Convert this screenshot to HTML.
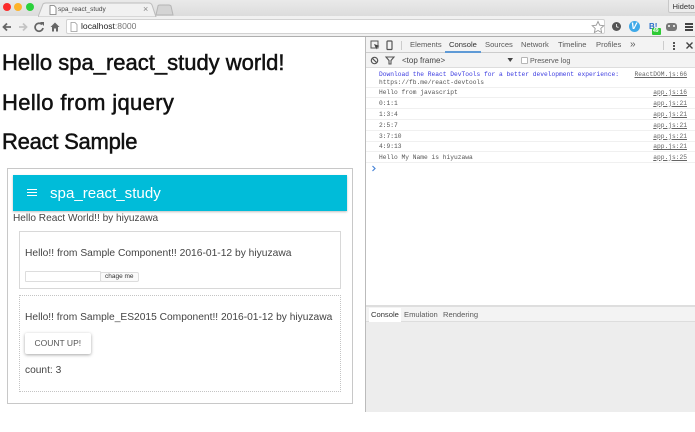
<!DOCTYPE html>
<html><head><meta charset="utf-8">
<style>
html,body{margin:0;padding:0;background:#fff;}
body{width:695px;height:432px;position:relative;overflow:hidden;font-family:"Liberation Sans",sans-serif;filter:blur(.3px);}
.a{position:absolute;white-space:nowrap;}
.box{position:absolute;box-sizing:border-box;}
.m{font-family:"Liberation Mono",monospace;font-size:6.25px;color:#555;position:absolute;white-space:nowrap;line-height:9px;}
.l{font-family:"Liberation Mono",monospace;font-size:6.25px;color:#666;position:absolute;right:8px;text-decoration:underline;white-space:nowrap;line-height:9px;}
.sep{position:absolute;left:366px;right:0;height:1px;background:#f0f0f0;}
.t{position:absolute;font-size:7.6px;color:#5a5a5a;white-space:nowrap;line-height:10px;}
h1{position:absolute;left:2px;margin:0;font-weight:normal;font-size:22px;-webkit-text-stroke:.5px #111;color:#111;white-space:nowrap;line-height:28px;}
</style></head><body>
<!-- browser chrome -->
<div class="box" style="left:0;top:0;width:695px;height:16px;background:linear-gradient(#e9e9e9,#dcdcdc);"></div>
<div class="box" style="left:0;top:16px;width:695px;height:21px;background:#f1f1f1;border-bottom:1px solid #aeaeae;"></div>
<div class="box" style="left:3px;top:3px;width:8px;height:8px;border-radius:50%;background:#fb2b2b;"></div>
<div class="box" style="left:14px;top:3px;width:8px;height:8px;border-radius:50%;background:#fdb32a;"></div>
<div class="box" style="left:26px;top:3px;width:8px;height:8px;border-radius:50%;background:#2bd13c;"></div>
<svg class="a" style="left:38px;top:2px" width="125" height="15"><path d="M0 15 L5 2 Q6 1 8 1 L111 1 Q113 1 114 3 L118 15 Z" fill="#f1f1f1" stroke="#bdbdbd" stroke-width="1"/></svg>
<svg class="a" style="left:155px;top:4px" width="20" height="12"><path d="M1 11 L3 2 Q3 1 5 1 L14 1 Q15 1 16 2 L18 11 Z" fill="#d4d4d4" stroke="#b5b5b5"/></svg>
<svg class="a" style="left:49px;top:5px" width="8" height="10"><path d="M1 .5 H5 L7 2.5 V9.5 H1 Z" fill="#fff" stroke="#777" stroke-width=".8"/></svg>
<div class="a" style="left:58px;top:5px;font-size:6.5px;line-height:10px;color:#444;">spa_react_study</div>
<div class="a" style="left:143px;top:4px;font-size:9px;line-height:11px;color:#888;">×</div>
<!-- nav icons -->
<svg class="a" style="left:0;top:20px" width="62" height="14">
<path d="M11 7 H4 M7 3.5 L3.5 7 L7 10.5" fill="none" stroke="#666" stroke-width="1.8"/>
<path d="M19 7 H26 M23 3.5 L26.5 7 L23 10.5" fill="none" stroke="#c4c4c4" stroke-width="1.8"/>
<path d="M42 4.5 A4 4 0 1 0 43 8" fill="none" stroke="#666" stroke-width="1.7"/><path d="M40 2 L44 2 L44 6 Z" fill="#666"/>
<path d="M50.500 7 L55 2.500 L59.500 7 H58 V11.500 H56 V8.500 H54 V11.500 H52 V7 Z" fill="#666"/>
</svg>
<div class="box" style="left:66px;top:19px;width:539px;height:15px;background:#fff;border:1px solid #d2d2d2;border-radius:2px;"></div>
<svg class="a" style="left:70px;top:22px" width="8" height="10"><path d="M1 .5 H5 L7 2.5 V9.5 H1 Z" fill="#fff" stroke="#999" stroke-width=".8"/></svg>
<div class="a" style="left:81px;top:21px;font-size:8.6px;line-height:11px;color:#222;">localhost<span style="color:#777">:8000</span></div>
<svg class="a" style="left:591px;top:20px" width="14" height="14"><path d="M7 1.500 L8.700 5.200 L12.800 5.700 L9.800 8.400 L10.600 12.500 L7 10.500 L3.400 12.500 L4.200 8.400 L1.200 5.700 L5.300 5.200 Z" fill="#fff" stroke="#999" stroke-width=".9"/></svg>
<div class="box" style="left:612px;top:22px;width:9px;height:9px;border-radius:50%;background:#555;"></div>
<svg class="a" style="left:612px;top:22px" width="9" height="9"><path d="M4.500 2 V4.700 L6.500 5.500" fill="none" stroke="#ddd"/></svg>
<div class="box" style="left:629px;top:21px;width:11px;height:11px;border-radius:50%;background:#3fa9e8;"></div>
<div class="a" style="left:631px;top:21px;font-size:9px;line-height:11px;font-weight:bold;font-style:italic;color:#fff;">V</div>
<div class="a" style="left:649px;top:22px;font-size:8px;line-height:9px;font-weight:bold;color:#2a6fc9;">B!</div>
<div class="box" style="left:652px;top:28px;width:9px;height:7px;background:#2ecb35;border-radius:1px;"></div>
<div class="a" style="left:653px;top:28px;font-size:5px;line-height:7px;color:#fff;font-weight:bold;">49</div>
<div class="box" style="left:666px;top:23px;width:11px;height:8px;border-radius:3px;background:#777;"></div>
<div class="box" style="left:668px;top:25px;width:2px;height:2px;background:#ddd;"></div>
<div class="box" style="left:673px;top:25px;width:2px;height:2px;background:#ddd;"></div>
<div class="box" style="left:685px;top:23px;width:8px;height:2px;background:#444;"></div>
<div class="box" style="left:685px;top:26px;width:8px;height:2px;background:#444;"></div>
<div class="box" style="left:685px;top:29px;width:8px;height:2px;background:#444;"></div>
<div class="box" style="left:668px;top:0;width:27px;height:13px;background:#ececec;border:1px solid #c8c8c8;border-top:0;border-right:0;border-radius:0 0 0 2px;"></div>
<div class="a" style="left:672.500px;top:2px;font-size:7.6px;line-height:10px;color:#333;">Hideto</div>

<!-- page -->
<h1 style="top:49px;">Hello spa_react_study world!</h1>
<h1 style="top:89px;letter-spacing:.35px;">Hello from jquery</h1>
<h1 style="top:128px;letter-spacing:-.25px;">React Sample</h1>
<div class="box" style="left:7px;top:168px;width:346px;height:236px;border:1px solid #c8c8c8;"></div>
<div class="box" style="left:13px;top:175px;width:334px;height:36px;background:#00bcd9;box-shadow:0 1px 2px rgba(0,0,0,.25);"></div>
<div class="box" style="left:27px;top:189px;width:10px;height:1.200px;background:#fff;"></div>
<div class="box" style="left:27px;top:192px;width:10px;height:1.200px;background:#fff;"></div>
<div class="box" style="left:27px;top:195px;width:10px;height:1.200px;background:#fff;"></div>
<div class="a" style="left:50px;top:185px;font-size:15.100px;line-height:18px;color:#fff;">spa_react_study</div>
<div class="a" style="left:13px;top:212.500px;font-size:10.100px;line-height:12px;color:#444;">Hello React World!! by hiyuzawa</div>
<div class="box" style="left:19px;top:231px;width:322px;height:58px;border:1px solid #d8d8d8;"></div>
<div class="a" style="left:25px;top:248px;font-size:10.270px;line-height:12px;color:#444;">Hello!! from Sample Component!! 2016-01-12 by hiyuzawa</div>
<div class="box" style="left:25px;top:271px;width:76px;height:11px;border:1px solid #ddd;border-radius:1px;background:#fff;"></div>
<div class="box" style="left:100px;top:272px;width:39px;height:10px;border:1px solid #ddd;border-radius:2px;background:#fafafa;"></div>
<div class="a" style="left:105px;top:272px;font-size:6.500px;line-height:10px;color:#333;">chage me</div>
<div class="box" style="left:19px;top:295px;width:322px;height:97px;border:1px dotted #c4c4c4;"></div>
<div class="a" style="left:25px;top:312px;font-size:10.230px;line-height:12px;color:#444;">Hello!! from Sample_ES2015 Component!! 2016-01-12 by hiyuzawa</div>
<div class="box" style="left:25px;top:333px;width:66px;height:21px;background:#fff;border-radius:2px;box-shadow:0 1px 3px rgba(0,0,0,.35);"></div>
<div class="a" style="left:34.500px;top:338px;font-size:8.500px;line-height:11px;color:#555;">COUNT UP!</div>
<div class="a" style="left:25px;top:365px;font-size:10.200px;line-height:12px;color:#444;">count: 3</div>

<!-- devtools -->
<div class="box" style="left:365px;top:37px;width:1px;height:375px;background:#bbb;"></div>
<div class="box" style="left:366px;top:37px;width:329px;height:16px;background:#f3f3f3;border-bottom:1px solid #ccc;"></div>
<svg class="a" style="left:370px;top:40px" width="26" height="11"><rect x="1" y="1" width="7" height="7" fill="none" stroke="#555" stroke-width="1"/><path d="M4 4 L9.500 6 L7 7 L6.500 9.500 Z" fill="#444"/><rect x="17" y="1" width="5" height="8.500" rx=".8" fill="none" stroke="#555" stroke-width="1.200"/></svg>
<div class="box" style="left:401px;top:41px;width:1px;height:9px;background:#ccc;"></div>
<div class="t" style="left:410px;top:40px;">Elements</div>
<div class="t" style="left:449px;top:40px;color:#333;">Console</div>
<div class="box" style="left:445px;top:51px;width:36px;height:2px;background:#5e9ad6;"></div>
<div class="t" style="left:485px;top:40px;">Sources</div>
<div class="t" style="left:521px;top:40px;">Network</div>
<div class="t" style="left:558px;top:40px;">Timeline</div>
<div class="t" style="left:596px;top:40px;">Profiles</div>
<div class="t" style="left:630px;top:40px;font-size:10px;">»</div>
<div class="box" style="left:663px;top:41px;width:1px;height:9px;background:#ccc;"></div>
<div class="box" style="left:673px;top:42px;width:2px;height:2px;background:#555;"></div>
<div class="box" style="left:673px;top:45px;width:2px;height:2px;background:#555;"></div>
<div class="box" style="left:673px;top:48px;width:2px;height:2px;background:#555;"></div>
<svg class="a" style="left:685px;top:41px" width="9" height="9"><path d="M1.500 1.500 L7.500 7.500 M7.500 1.500 L1.500 7.500" stroke="#444" stroke-width="1.400"/></svg>
<div class="box" style="left:366px;top:53px;width:329px;height:15px;background:#f3f3f3;border-bottom:1px solid #ddd;"></div>
<svg class="a" style="left:369px;top:55px" width="30" height="11"><circle cx="5.500" cy="5.500" r="3.200" fill="none" stroke="#555" stroke-width="1.200"/><path d="M3.200 3.200 L7.800 7.800" stroke="#555" stroke-width="1.200"/><path d="M17 2 H25 L22 5.500 V9 H20 V5.500 Z" fill="none" stroke="#555" stroke-width="1.100"/></svg>
<div class="t" style="left:402px;top:55.500px;color:#444;font-size:8px;">&lt;top frame&gt;</div>
<svg class="a" style="left:507px;top:57px" width="7" height="6"><path d="M0.500 1 H6 L3.200 5 Z" fill="#444"/></svg>
<div class="box" style="left:521px;top:56.500px;width:7px;height:7px;border:1px solid #b5b5b5;background:#fff;border-radius:1px;"></div>
<div class="t" style="left:530px;top:55.500px;font-size:7.200px;">Preserve log</div>

<div class="m" style="left:379px;top:70px;color:#3a3ae0;">Download the React DevTools for a better development experience:</div>
<div class="l" style="top:70px;">ReactDOM.js:66</div>
<div class="m" style="left:379px;top:77.500px;">https://fb.me/react-devtools</div>
<div class="sep" style="top:87px;"></div>
<div class="m" style="left:379px;top:87.500px;">Hello from javascript</div><div class="l" style="top:87.500px;">app.js:16</div>
<div class="sep" style="top:97px;"></div>
<div class="m" style="left:379px;top:98.500px;">0:1:1</div><div class="l" style="top:98.500px;">app.js:21</div>
<div class="sep" style="top:108px;"></div>
<div class="m" style="left:379px;top:109.500px;">1:3:4</div><div class="l" style="top:109.500px;">app.js:21</div>
<div class="sep" style="top:119px;"></div>
<div class="m" style="left:379px;top:120.500px;">2:5:7</div><div class="l" style="top:120.500px;">app.js:21</div>
<div class="sep" style="top:130px;"></div>
<div class="m" style="left:379px;top:131.500px;">3:7:10</div><div class="l" style="top:131.500px;">app.js:21</div>
<div class="sep" style="top:141px;"></div>
<div class="m" style="left:379px;top:142px;">4:9:13</div><div class="l" style="top:142px;">app.js:21</div>
<div class="sep" style="top:151px;"></div>
<div class="m" style="left:379px;top:152.500px;">Hello My Name is hiyuzawa</div><div class="l" style="top:152.500px;">app.js:25</div>
<div class="sep" style="top:162px;"></div>
<svg class="a" style="left:371px;top:165px" width="6" height="7"><path d="M1.500 1 L4 3.500 L1.500 6" fill="none" stroke="#4a86d8" stroke-width="1.200"/></svg>

<div class="box" style="left:366px;top:305px;width:329px;height:2px;background:#dedede;"></div>
<div class="box" style="left:366px;top:307px;width:329px;height:105px;background:#ededed;"></div>
<div class="box" style="left:366px;top:307px;width:329px;height:15px;background:#f3f3f3;border-bottom:1px solid #ddd;"></div>
<div class="box" style="left:369px;top:308px;width:32px;height:14px;background:#fff;"></div>
<div class="t" style="left:371px;top:309.500px;color:#333;">Console</div>
<div class="t" style="left:404px;top:309.500px;">Emulation</div>
<div class="t" style="left:443px;top:309.500px;">Rendering</div>
</body></html>
